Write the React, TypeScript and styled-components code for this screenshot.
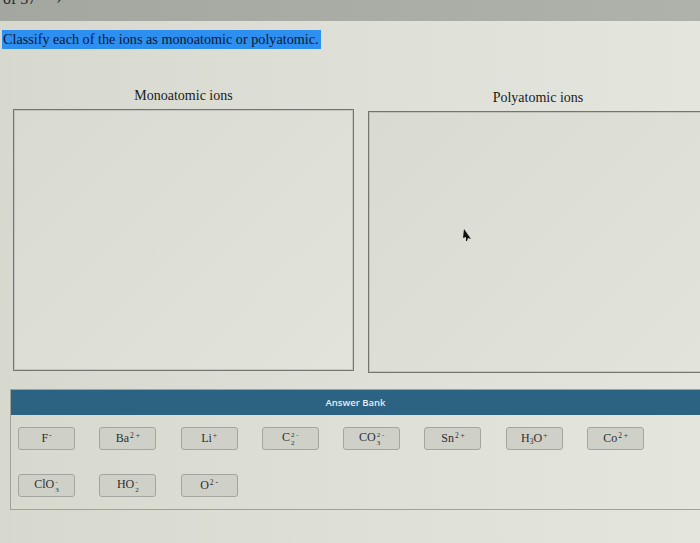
import styled, { createGlobalStyle } from "styled-components";
import type React from "react";

const GlobalStyle = createGlobalStyle`
    html, body {
        margin: 0;
        padding: 0;
    }
    body {
        width: 700px;
        height: 543px;
        overflow: hidden;
        background: linear-gradient(90deg, #d7d8ce 0%, #dedfd6 50%, #e4e6de 100%);
        font-family: "Liberation Serif", "Times New Roman", serif;
        color: #222;
    }
`;

const TopStrip = styled.div`
    height: 21px;
    background: linear-gradient(90deg, #a3a7a0, #aeb2ab);
    overflow: hidden;
    display: flex;
    gap: 20px;
    padding-left: 3px;
    color: #2a2d2a;
    font-size: 16px;
    line-height: 16px;

    span {
        margin-top: -9px;
    }
`;

const Prompt = styled.div`
    margin-top: 9px;
    padding-left: 2px;
    height: 19px;
`;

const Highlight = styled.span`
    display: inline-block;
    background: #2d8ff0;
    color: #0b1830;
    font-size: 14.2px;
    line-height: 19px;
    padding: 0 2px 0 1px;
`;

const Columns = styled.div`
    display: grid;
    grid-template-columns: 341px 340px;
    column-gap: 14px;
    margin-top: 38px;
    padding-left: 13px;
`;

const Column = styled.div<{ $shift?: number }>`
    display: flex;
    flex-direction: column;
    margin-top: ${(p) => p.$shift ?? 0}px;
`;

const ColumnTitle = styled.div`
    text-align: center;
    font-size: 14px;
    line-height: 18px;
    height: 22px;
    color: #1a1a1a;
`;

const DropBox = styled.div`
    position: relative;
    height: 260px;
    border: 1px solid #74756f;
    box-shadow: inset 0 0 0 1px rgba(120, 120, 115, 0.25);
    background: linear-gradient(135deg, #d9dad1, #e2e4dc);
`;

const Cursor = styled.svg`
    position: absolute;
    left: 92px;
    top: 116px;
`;

const Bank = styled.div`
    margin: 16px -10px 0 10px;
    border: 1px solid #9fa19b;
    border-right: none;
`;

const BankHeader = styled.div`
    height: 25px;
    background: #2c6282;
    color: #e8eef2;
    font-family: "Open Sans", "Liberation Sans", sans-serif;
    font-weight: 600;
    font-size: 9.5px;
    line-height: 25px;
    text-align: center;
    padding-right: 10px;
`;

const Tiles = styled.div`
    display: grid;
    grid-template-columns: repeat(8, 57px);
    column-gap: 24.3px;
    row-gap: 24px;
    padding: 12px 0 12px 7px;
`;

const Tile = styled.div`
    height: 21px;
    border: 1px solid #a3a59e;
    border-radius: 3px;
    background: #cfd1c8;
    display: flex;
    align-items: center;
    justify-content: center;
    font-size: 12px;
    color: #2e2e2e;
`;

const Scripts = styled.span`
    display: inline-flex;
    flex-direction: column;
    font-size: 7px;
    line-height: 8px;
    margin-left: 1px;
    vertical-align: middle;
`;

const Sup = styled.span`
    font-size: 7.5px;
    vertical-align: 4px;
    margin-left: 1px;
`;

const Sub = styled.span`
    font-size: 7.5px;
    vertical-align: -2px;
`;

type Ion = { base: string; sub?: string; charge: string; tail?: string };

const IonLabel = ({ base, sub, charge, tail }: Ion): React.ReactElement => {
    if (tail) {
        return (
            <span>
                {base}
                <Sub>{sub}</Sub>
                {tail}
                <Sup>{charge}</Sup>
            </span>
        );
    }
    return (
        <span>
            {base}
            {sub ? (
                <Scripts>
                    <span>{charge}</span>
                    <span>{sub}</span>
                </Scripts>
            ) : (
                <Sup>{charge}</Sup>
            )}
        </span>
    );
};

const ions: Ion[] = [
    { base: "F", charge: "-" },
    { base: "Ba", charge: "2 +" },
    { base: "Li", charge: "+" },
    { base: "C", sub: "2", charge: "2 -" },
    { base: "CO", sub: "3", charge: "2 -" },
    { base: "Sn", charge: "2 +" },
    { base: "H", sub: "3", tail: "O", charge: "+" },
    { base: "Co", charge: "2 +" },
    { base: "ClO", sub: "3", charge: "-" },
    { base: "HO", sub: "2", charge: "-" },
    { base: "O", charge: "2 -" },
];

const App = () => {
    return (
        <>
            <GlobalStyle />
            <TopStrip>
                <span>of 37</span>
                <span>›</span>
            </TopStrip>
            <Prompt>
                <Highlight>Classify each of the ions as monoatomic or polyatomic.</Highlight>
            </Prompt>
            <Columns>
                <Column>
                    <ColumnTitle>Monoatomic ions</ColumnTitle>
                    <DropBox />
                </Column>
                <Column $shift={2}>
                    <ColumnTitle>Polyatomic ions</ColumnTitle>
                    <DropBox>
                        <Cursor width="12" height="14" viewBox="0 0 12 14">
                            <path d="M3 1 L10 11 L7 10 L6 13 L5 13 L5 9 L2 10 Z" fill="#111" />
                        </Cursor>
                    </DropBox>
                </Column>
            </Columns>
            <Bank>
                <BankHeader>Answer Bank</BankHeader>
                <Tiles>
                    {ions.map((ion, i) => (
                        <Tile key={i}>
                            <IonLabel {...ion} />
                        </Tile>
                    ))}
                </Tiles>
            </Bank>
        </>
    );
};

export default App;
